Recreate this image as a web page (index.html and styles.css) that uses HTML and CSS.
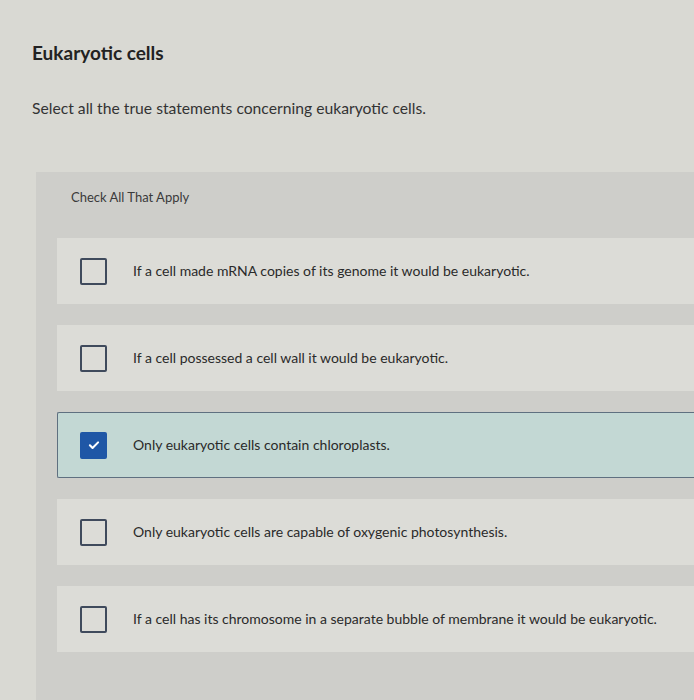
FILE: index.html
```html
<!DOCTYPE html>
<html>
<head>
<meta charset="utf-8">
<link rel="stylesheet" href="styles.css">
</head>
<body>
<div class="page">
  <h1 class="title">Eukaryotic cells</h1>
  <p class="prompt">Select all the true statements concerning eukaryotic cells.</p>
  <div class="panel">
    <div class="instr">Check All That Apply</div>
    <div class="options">
      <div class="option">
        <span class="box"></span>
        <span class="label">If a cell made mRNA copies of its genome it would be eukaryotic.</span>
      </div>
      <div class="option">
        <span class="box"></span>
        <span class="label">If a cell possessed a cell wall it would be eukaryotic.</span>
      </div>
      <div class="option selected">
        <span class="box checked">
          <svg viewBox="0 0 24 24" width="14" height="14"><path d="M5 12.5l4.5 4.5L19 7.5" fill="none" stroke="#fff" stroke-width="3.6" stroke-linecap="round" stroke-linejoin="round"/></svg>
        </span>
        <span class="label">Only eukaryotic cells contain chloroplasts.</span>
      </div>
      <div class="option">
        <span class="box"></span>
        <span class="label">Only eukaryotic cells are capable of oxygenic photosynthesis.</span>
      </div>
      <div class="option">
        <span class="box"></span>
        <span class="label">If a cell has its chromosome in a separate bubble of membrane it would be eukaryotic.</span>
      </div>
    </div>
  </div>
</div>
</body>
</html>
```
FILE: styles.css
```css
html, body {
  margin: 0;
  padding: 0;
}
body {
  background: #d9d9d3;
  font-family: "Lato", "Open Sans", sans-serif;
  color: #2b2b2b;
  width: 694px;
  height: 700px;
  overflow: hidden;
}
.page {
  padding: 40px 0 0 32px;
}
.title {
  margin: 0;
  font-size: 19px;
  font-weight: 700;
  color: #222;
  line-height: 26px;
}
.prompt {
  margin: 32px 0 0 0;
  font-size: 15.7px;
  line-height: 20px;
  color: #333;
}
.panel {
  margin: 54px 0 0 4px;
  background: #cececa;
  padding: 16px 0 60px 21px;
}
.instr {
  font-size: 13px;
  color: #3a3a3a;
  margin-left: 14px;
  line-height: 18px;
}
.options {
  margin-top: 32px;
  display: flex;
  flex-direction: column;
  gap: 21px;
}
.option {
  display: flex;
  align-items: center;
  gap: 26px;
  height: 64px;
  padding-left: 22px;
  background: #dcdcd7;
  border: 1px solid transparent;
  border-right: none;
}
.option.selected {
  background: #c3d8d4;
  border-color: #5f7080;
  border-radius: 2px 0 0 2px;
}
.box {
  width: 23px;
  height: 23px;
  border: 2px solid #3f4a5c;
  border-radius: 2px;
  flex: none;
  display: flex;
  align-items: center;
  justify-content: center;
  box-sizing: content-box;
}
.box.checked {
  background: #1f57a6;
  border-color: #1f57a6;
}
.label {
  font-size: 14px;
  color: #2a2a2a;
  line-height: 18px;
}
```
